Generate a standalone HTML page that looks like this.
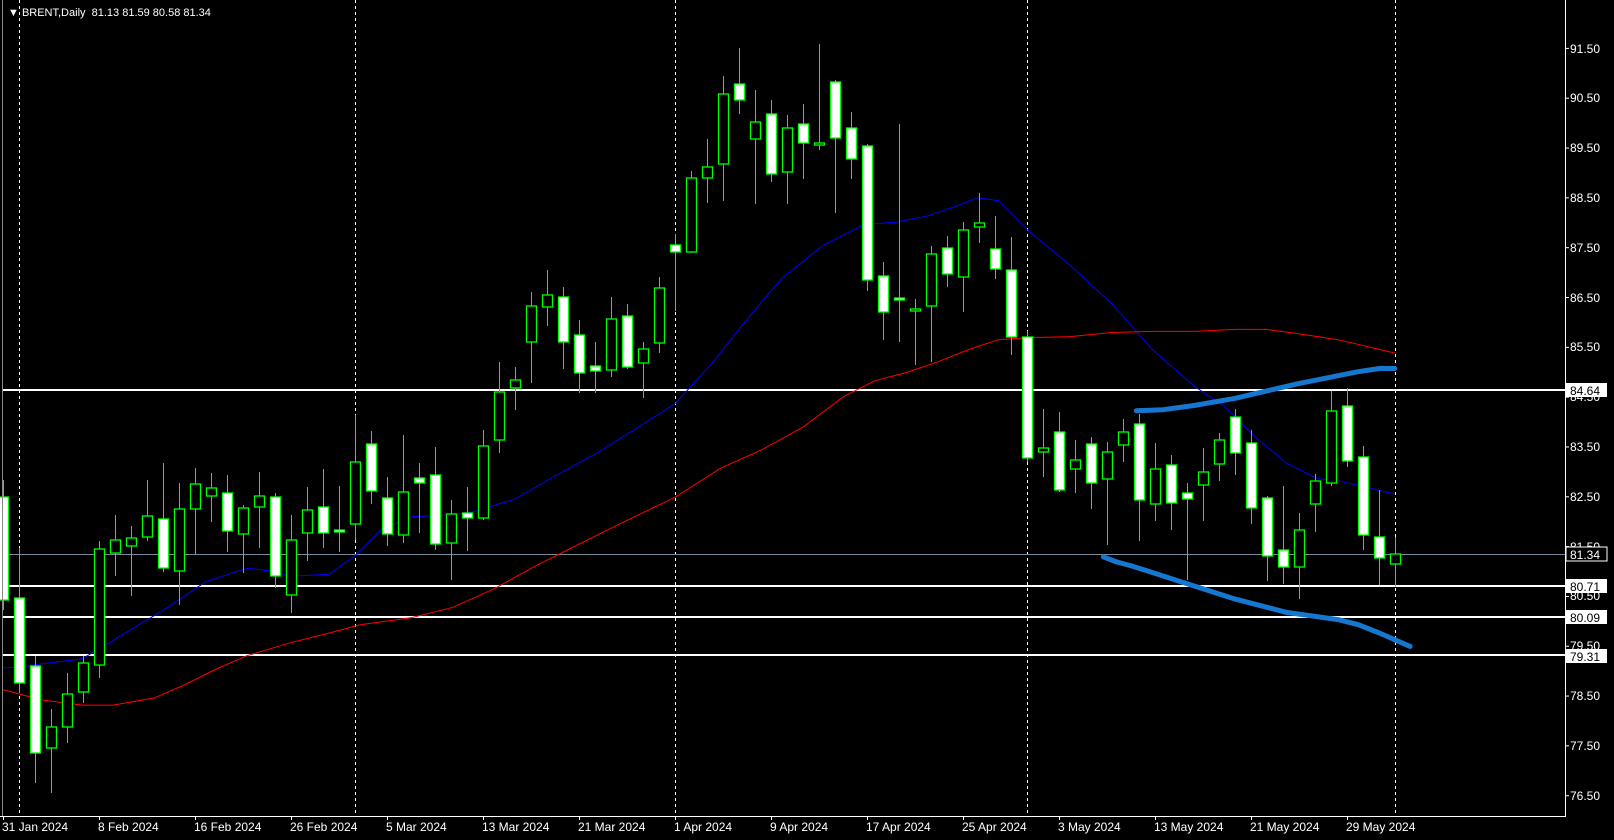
<!DOCTYPE html>
<html><head><meta charset="utf-8"><style>
html,body{margin:0;padding:0;background:#000;width:1614px;height:840px;overflow:hidden}
svg{display:block}
text{font-family:"Liberation Sans",sans-serif;font-size:12px;fill:#fff}
</style></head><body>
<svg id="s" width="1614" height="840" viewBox="0 0 1614 840" xmlns="http://www.w3.org/2000/svg">
<rect width="1614" height="840" fill="#000"/>
<g id="grid"></g>
<g id="lines"></g>
<g id="candles"></g>
<g id="draw"></g>
<line x1="1565.5" y1="0" x2="1565.5" y2="816" stroke="#fff" stroke-width="1"/>
<line x1="0" y1="816.5" x2="1566" y2="816.5" stroke="#fff" stroke-width="1"/>
<line x1="2.5" y1="0" x2="2.5" y2="816" stroke="#888" stroke-width="1"/>
<g id="axis">
<text x="1570" y="53">91.50</text>
<text x="1570" y="102">90.50</text>
<text x="1570" y="152">89.50</text>
<text x="1570" y="202">88.50</text>
<text x="1570" y="252">87.50</text>
<text x="1570" y="302">86.50</text>
<text x="1570" y="351">85.50</text>
<text x="1570" y="401">84.50</text>
<text x="1570" y="451">83.50</text>
<text x="1570" y="501">82.50</text>
<text x="1570" y="551">81.50</text>
<text x="1570" y="600">80.50</text>
<text x="1570" y="650">79.50</text>
<text x="1570" y="700">78.50</text>
<text x="1570" y="750">77.50</text>
<text x="1570" y="800">76.50</text>
<rect x="1566" y="383" width="41" height="14" fill="#fff"/><text x="1570" y="395" style="fill:#000">84.64</text>
<rect x="1566" y="547" width="41" height="14" fill="#000" stroke="#fff"/><text x="1570" y="559">81.34</text>
<rect x="1566" y="579" width="41" height="14" fill="#fff"/><text x="1570" y="591" style="fill:#000">80.71</text>
<rect x="1566" y="610" width="41" height="14" fill="#fff"/><text x="1570" y="622" style="fill:#000">80.09</text>
<rect x="1566" y="649" width="41" height="14" fill="#fff"/><text x="1570" y="661" style="fill:#000">79.31</text>
</g>
<g id="dates">
<text x="2" y="831">31 Jan 2024</text>
<text x="98" y="831">8 Feb 2024</text>
<text x="194" y="831">16 Feb 2024</text>
<text x="290" y="831">26 Feb 2024</text>
<text x="386" y="831">5 Mar 2024</text>
<text x="482" y="831">13 Mar 2024</text>
<text x="578" y="831">21 Mar 2024</text>
<text x="674" y="831">1 Apr 2024</text>
<text x="770" y="831">9 Apr 2024</text>
<text x="866" y="831">17 Apr 2024</text>
<text x="962" y="831">25 Apr 2024</text>
<text x="1058" y="831">3 May 2024</text>
<text x="1154" y="831">13 May 2024</text>
<text x="1250" y="831">21 May 2024</text>
<text x="1346" y="831">29 May 2024</text>
</g>
<text x="8" y="16" style="font-size:11px">▼ BRENT,Daily&#160; 81.13 81.59 80.58 81.34</text>
</svg>
<script>
var NS="http://www.w3.org/2000/svg";
function el(p,t,a){var e=document.createElementNS(NS,t);for(var k in a)e.setAttribute(k,a[k]);document.getElementById(p).appendChild(e);return e;}
// vertical dotted lines
[19.5,355.5,675.5,1027.5,1395.5].forEach(function(x){el("grid","line",{x1:x,y1:0,x2:x,y2:816,stroke:"#fff","stroke-dasharray":"3,3","stroke-width":1});});
// horizontal lines
el("lines","line",{x1:3,y1:390,x2:1565,y2:390,stroke:"#fff","stroke-width":2});
el("lines","line",{x1:3,y1:554.5,x2:1565,y2:554.5,stroke:"#7a8a9a","stroke-width":1});
el("lines","line",{x1:3,y1:586,x2:1565,y2:586,stroke:"#fff","stroke-width":2});
el("lines","line",{x1:3,y1:617,x2:1565,y2:617,stroke:"#fff","stroke-width":2});
el("lines","line",{x1:3,y1:655,x2:1565,y2:655,stroke:"#fff","stroke-width":2});
// MAs
function pl(pts,col){var s=pts.map(function(p){return (p[0]*1.0293).toFixed(1)+","+(p[1]*1.0293).toFixed(1)}).join(" ");el("lines","polyline",{points:s,fill:"none",stroke:col,"stroke-width":1});}
pl([[3,649],[20,648],[40,645],[80,640],[100,628],[130,610],[160,592],[200,565],[240,552],[265,555],[280,560],[320,558],[345,540],[370,515],[400,502],[440,500],[460,497],[500,485],[540,462],[580,440],[620,415],[656,392],[690,355],[730,305],[760,270],[800,238],[840,218],[870,216],[900,210],[930,200],[950,192],[970,195],[1000,225],[1040,258],[1080,295],[1120,340],[1160,375],[1190,395],[1220,425],[1250,450],[1280,465],[1300,467],[1355,480]],"#0000ff");
pl([[3,670],[40,680],[80,685],[110,685],[150,678],[180,665],[210,650],[240,637],[280,625],[320,615],[350,607],[400,600],[440,590],[480,572],[520,550],[560,530],[600,510],[656,483],[700,455],[740,437],[780,415],[820,385],[850,370],[880,362],[910,352],[940,340],[970,330],[1000,328],[1040,327],[1080,323],[1120,322],[1160,322],[1200,320],[1230,320],[1260,324],[1300,330],[1355,343]],"#ff0000");
// candles: [wickTop, bodyTop, bodyBot, wickBot, white]
var C=[
[480,497,600,610,1],[548,598,683,693,1],[656,666,753,783,1],[709,727,748,793,0],[673,694,727,743,0],
[656,663,692,703,0],[541,549,665,678,0],[515,540,553,576,0],[526,538,546,596,0],[480,516,537,541,0],
[463,519,568,572,1],[483,509,571,605,0],[468,484,509,554,0],[473,488,496,522,0],[475,493,531,552,1],
[505,508,534,573,0],[472,496,507,548,0],[493,497,576,588,1],[515,540,595,613,0],[487,510,533,561,0],
[469,507,533,548,1],[486,530,532,552,1],[415,462,524,540,0],[431,444,491,504,1],[477,498,534,546,1],
[435,492,535,543,0],[463,478,483,533,1],[447,475,544,550,1],[500,514,543,580,0],[487,513,518,551,1],
[430,446,518,520,0],[362,392,440,453,0],[367,380,388,410,0],[292,306,342,383,0],[270,295,307,326,0],
[287,297,342,369,1],[320,335,373,393,1],[342,366,371,393,1],[297,319,370,377,0],[304,316,367,369,1],
[342,349,363,398,0],[277,288,343,353,0],[234,245,252,311,1],[171,178,252,253,0],[139,167,178,203,0],
[76,94,164,201,0],[48,84,100,114,1],[90,122,139,204,0],[100,114,174,182,1],[115,128,172,204,0],
[104,124,143,179,1],[44,143,145,150,0],[80,82,138,213,1],[112,128,159,179,1],[144,146,280,291,1],
[262,276,312,340,1],[124,298,300,342,1],[299,309,311,365,0],[246,254,306,362,0],[236,248,274,287,1],
[222,230,277,312,0],[193,223,227,243,0],[216,249,269,279,1],[237,270,337,355,1],[331,337,458,462,1],
[409,448,452,477,0],[412,432,490,492,1],[440,460,469,493,0],[437,444,483,509,1],[442,452,479,545,0],
[419,432,445,462,0],[414,424,500,541,1],[443,469,504,521,0],[455,465,503,530,1],[483,493,499,580,1],
[448,472,485,521,0],[433,440,464,481,0],[409,417,453,475,1],[430,443,508,524,1],[496,498,556,581,1],
[486,550,567,584,1],[513,530,567,599,0],[474,481,504,532,0],[391,411,483,486,0],[388,406,461,467,1],
[446,457,535,550,1],[490,537,558,585,1],[537,554,564,587,0]
];
C.forEach(function(c,i){var x=3.5+16*i;
 el("candles","line",{x1:x,y1:c[0],x2:x,y2:c[3],stroke:"#00ff00","stroke-width":1});
 var h=Math.max(c[2]-c[1],2);
 el("candles","rect",{x:x-5,y:c[1],width:10,height:h,fill:c[4]?"#fff":"#000",stroke:"#00ff00","stroke-width":1.3});
});
// hand drawn curves
function sc(pts){return pts.map(function(p){return (p[0]*1.0293).toFixed(1)+","+(p[1]*1.0293).toFixed(1)}).join(" ");}
el("draw","polyline",{points:sc([[1104,399],[1130,398],[1160,394],[1200,387],[1260,373],[1320,361],[1340,358],[1355,358]]),fill:"none",stroke:"#1577d0","stroke-width":5,"stroke-linecap":"round","stroke-linejoin":"round"});
el("draw","polyline",{points:sc([[1072,541],[1085,546],[1100,550],[1150,566],[1200,582],[1250,595],[1300,602],[1320,607],[1340,615],[1370,628]]),fill:"none",stroke:"#1577d0","stroke-width":5,"stroke-linecap":"round","stroke-linejoin":"round"});
// axis ticks
for(var i=0;i<16;i++){var y=48.4+i*49.82;el("axis","line",{x1:1565,y1:y,x2:1569,y2:y,stroke:"#fff"});}
for(var j=0;j<15;j++){var x=3.5+96*j;el("dates","line",{x1:x,y1:816,x2:x,y2:820,stroke:"#fff"});}
</script>
</body></html>
